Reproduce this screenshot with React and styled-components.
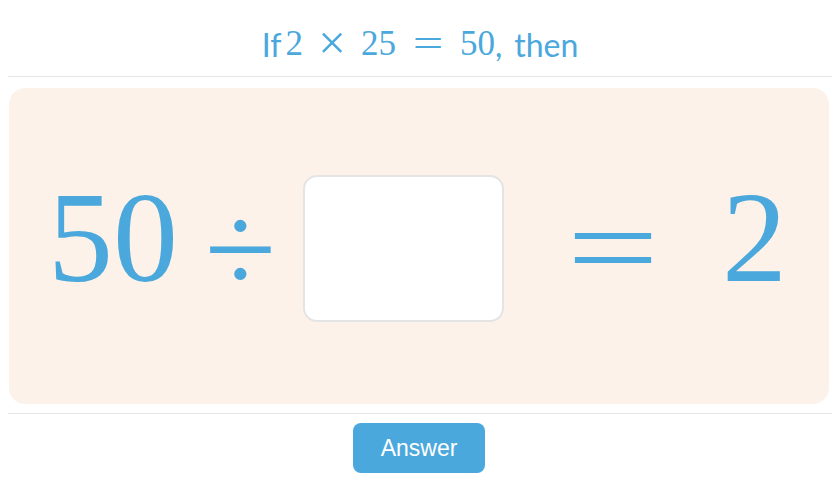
import React from 'react';
import styled, { createGlobalStyle } from 'styled-components';

const blue = '#4aa8dc';

const GlobalStyle = createGlobalStyle`
  html, body {
    margin: 0;
    padding: 0;
    background: #ffffff;
  }
  body {
    font-family: Lato, 'Liberation Sans', sans-serif;
  }
`;

const Page = styled.div`
  width: 840px;
  height: 501px;
  padding: 0 8px;
  box-sizing: border-box;
  display: flex;
  flex-direction: column;
`;

const Prompt = styled.div`
  height: 77px;
  border-bottom: 1px solid #e6e6e6;
  display: flex;
  justify-content: center;
  align-items: center;
  color: ${blue};
  padding: 12px 0 0 0;
  box-sizing: border-box;
`;

const Word = styled.span`
  font-family: Lato, 'Liberation Sans', sans-serif;
  font-size: 32px;
  margin: ${(p) => p.$margin || '0'};
`;

const MathText = styled.span`
  font-family: 'Liberation Serif', 'DejaVu Serif', serif;
  font-size: 35px;
`;

const MathOp = styled.span`
  font-family: 'Liberation Serif', 'DejaVu Serif', serif;
  font-size: 35px;
  display: inline-block;
  width: ${(p) => p.$width};
  text-align: center;
  transform: scale(${(p) => p.$scale || '1'});
`;

const Panel = styled.div`
  margin: 11px 3px 9px 1px;
  height: 316px;
  background: #fcf2e9;
  border-radius: 16px;
  display: flex;
  align-items: center;
  padding-left: 39px;
  box-sizing: border-box;
  color: ${blue};
  font-family: 'Liberation Serif', 'DejaVu Serif', serif;
`;

const Big = styled.span`
  font-size: 130px;
  line-height: 1;
  display: inline-block;
  margin-top: ${(p) => p.$shift || '0'};
`;

const BigOp = styled(Big)`
  width: ${(p) => p.$width};
  text-align: center;
  transform: scale(${(p) => p.$scale || '1'});
`;

const AnswerBox = styled.div`
  width: 201px;
  height: 147px;
  box-sizing: border-box;
  background: #ffffff;
  border: 2px solid #e4e4e4;
  border-radius: 14px;
  margin-top: 4px;
`;

const Footer = styled.div`
  border-top: 1px solid #e6e6e6;
  display: flex;
  justify-content: center;
  padding: 9px 2px 0 0;
`;

const Button = styled.button`
  width: 132px;
  height: 50px;
  border: none;
  border-radius: 8px;
  background: ${blue};
  color: #ffffff;
  font-family: 'Liberation Sans', Arial, sans-serif;
  font-size: 23px;
  cursor: pointer;
`;

const App = () => {
  return (
    <>
      <GlobalStyle />
      <Page>
        <Prompt>
          <Word $margin="0 4px 0 0">If</Word>
          <MathText>2</MathText>
          <MathOp $width="58px" $scale="1.4">×</MathOp>
          <MathText>25</MathText>
          <MathOp $width="64px" $scale="1.55, 1.1">=</MathOp>
          <MathText>50</MathText>
          <Word>,</Word>
          <Word $margin="0 0 0 12px">then</Word>
        </Prompt>
        <Panel>
          <Big $shift="-18px">50</Big>
          <BigOp $width="125px" $shift="6px">÷</BigOp>
          <AnswerBox />
          <BigOp $width="218px" $shift="3px" $scale="1.26, 0.92">=</BigOp>
          <Big $shift="-18px">2</Big>
        </Panel>
        <Footer>
          <Button>Answer</Button>
        </Footer>
      </Page>
    </>
  );
};

export default App;
